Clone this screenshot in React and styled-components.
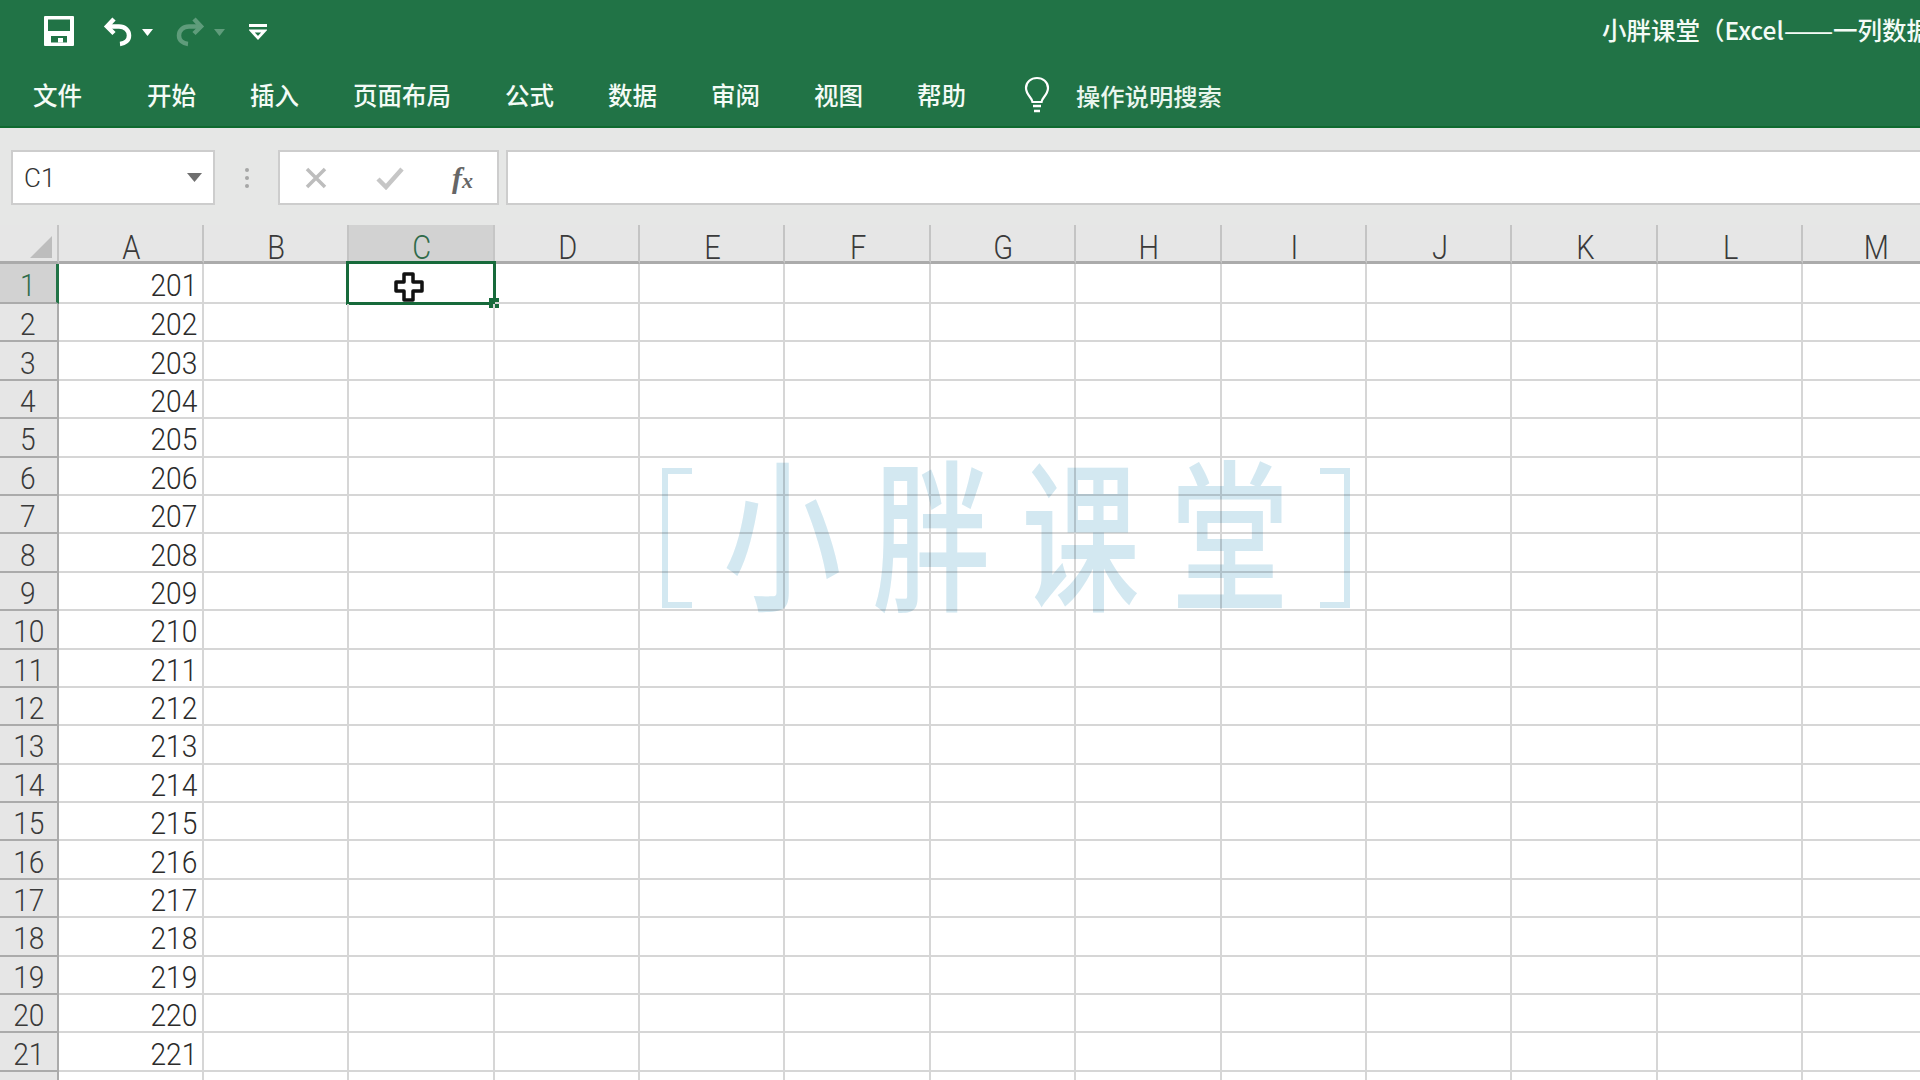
import React from "react";
import styled, { createGlobalStyle } from "styled-components";

const cjk = '"Noto Sans CJK SC", "Liberation Sans", sans-serif';
const sheetFont = 'Roboto, "Liberation Sans", sans-serif';
const ribbonGreen = "#217346";

const GlobalStyle = createGlobalStyle`
  html, body {
    margin: 0;
    padding: 0;
    background: #fff;
    overflow: hidden;
  }
`;

const Page = styled.div`
  position: relative;
  width: 1920px;
  height: 1080px;
  overflow: hidden;
  background: #fff;
  font-family: ${cjk};
`;

const Ribbon = styled.div`
  height: 128px;
  box-sizing: border-box;
  background: ${ribbonGreen};
  border-bottom: 2px solid #0f6a30;
  color: #fff;
`;

const TitleRow = styled.div`
  height: 64px;
  display: flex;
  align-items: center;
  padding-left: 44px;
`;

const QuickIcon = styled.svg`
  flex: none;
  display: block;
  margin-left: ${(p) => p.$left || 0}px;
  margin-top: ${(p) => p.$top || 0}px;
`;

const Title = styled.div`
  flex: none;
  margin-left: 1335px;
  margin-top: -6px;
  font-size: 24.5px;
  font-weight: 500;
  white-space: nowrap;
  color: #f4fbf6;
`;

const TitleDash = styled.span`
  display: inline-block;
  margin: 0 4px;
  transform: scaleX(1.2);
`;

const TabRow = styled.div`
  height: 62px;
  display: flex;
  align-items: center;
  padding-left: 33px;
`;

const Tab = styled.div`
  font-size: 24.5px;
  font-weight: 500;
  line-height: 34px;
  margin-right: ${(p) => p.$gap || 54}px;
  white-space: nowrap;
  color: #f4fbf6;
`;

const SearchHint = styled.div`
  display: flex;
  align-items: center;
  gap: 26px;
  font-size: 24.3px;
  font-weight: 500;
  margin-left: 12px;
  color: #eaf6ee;
`;

const FormulaBar = styled.div`
  height: 97px;
  box-sizing: border-box;
  background: #e6e7e6;
  padding: 22px 0 0 11px;
  display: flex;
  align-items: flex-start;
`;

const FieldBox = styled.div`
  flex: none;
  height: 55px;
  box-sizing: border-box;
  background: #fff;
  border: 2px solid #cdcdcd;
  display: flex;
  align-items: center;
`;

const NameBox = styled(FieldBox)`
  width: 204px;
  padding: 0 11px;
  justify-content: space-between;
  font-family: ${sheetFont};
  font-weight: 300;
  font-size: 26px;
  color: #333;
`;

const Dots = styled.div`
  flex: none;
  width: 63px;
  height: 55px;
  display: flex;
  flex-direction: column;
  align-items: center;
  justify-content: center;
  gap: 4px;

  span {
    width: 4px;
    height: 4px;
    background: #a6a6a6;
    border-radius: 50%;
  }
`;

const FxBox = styled(FieldBox)`
  width: 221px;
  justify-content: space-between;
  padding: 0 24px 0 24px;
`;

const FormulaInput = styled(FieldBox)`
  width: 1500px;
  margin-left: 7px;
`;

const FxLabel = styled.span`
  font-family: "Liberation Serif", serif;
  font-style: italic;
  font-weight: 700;
  font-size: 30px;
  line-height: 1;
  color: #666;

  small {
    font-size: 22px;
  }
`;

const Sheet = styled.div`
  display: grid;
  grid-template-columns: 58.5px repeat(13, 145.4px);
  grid-template-rows: 39px 40px repeat(21, 38.4px) 20px;
  width: 2000px;
`;

const Corner = styled.div`
  background: #e6e6e6;
  border-right: 2px solid #c4c4c4;
  border-bottom: 3px solid #ababab;
  box-sizing: border-box;
  position: relative;
`;

const CornerMark = styled.svg`
  position: absolute;
  right: 5px;
  bottom: 3px;
`;

const ColHead = styled.div`
  box-sizing: border-box;
  background: ${(p) => (p.$selected ? "#d2d2d2" : "#e6e6e6")};
  border-right: 2px solid ${(p) => (p.$selected ? "#c6c6c6" : "#c4c4c4")};
  border-bottom: 3px solid #ababab;
  display: flex;
  align-items: center;
  justify-content: center;
  color: ${(p) => (p.$selected ? "#2f6b4a" : "#3a3a3a")};
  font-family: ${sheetFont};
  font-weight: 300;
  font-size: 33px;
  line-height: 1;
  padding-top: 8px;
  padding-left: 2px;
`;

const RowHead = styled.div`
  box-sizing: border-box;
  background: ${(p) => (p.$selected ? "#d2d2d2" : "#e6e6e6")};
  border-right: ${(p) => (p.$selected ? "3px solid #217346" : "2px solid #ababab")};
  border-bottom: 2px solid #ababab;
  display: flex;
  align-items: center;
  justify-content: center;
  color: ${(p) => (p.$selected ? "#2f6b4a" : "#3a3a3a")};
  font-family: ${sheetFont};
  font-weight: 300;
  font-size: 32px;
  line-height: 1;
  padding-top: 4px;
`;

const Narrow = styled.span`
  display: inline-block;
  transform: scaleX(0.88);
  transform-origin: ${(p) => p.$origin || "center"};
`;

const Cell = styled.div`
  position: relative;
  box-sizing: border-box;
  border-right: 2px solid #d6d6d6;
  border-bottom: 2px solid #d6d6d6;
  display: flex;
  align-items: center;
  justify-content: flex-end;
  padding: 4px 5px 0 0;
  color: #2b2b2b;
  font-family: ${sheetFont};
  font-weight: 300;
  font-size: 32px;
  line-height: 1;
`;

const Selection = styled.div`
  position: absolute;
  left: -3px;
  top: -3px;
  right: -3px;
  bottom: -3px;
  border: 3px solid #176a3b;
  box-sizing: border-box;
`;

const FillHandle = styled.div`
  position: absolute;
  right: -6px;
  bottom: -6px;
  width: 10px;
  height: 10px;
  background: #176a3b;
`;

const CursorMark = styled.svg`
  position: absolute;
  left: 45px;
  top: 8px;
`;

const Watermark = styled.div`
  position: absolute;
  left: 662px;
  top: 463px;
  width: 688px;
  height: 150px;
  display: flex;
  align-items: center;
  justify-content: space-between;
  pointer-events: none;
  mix-blend-mode: multiply;
  color: #d3e8f1;
  font-family: ${cjk};
  font-size: 118px;
  font-weight: 500;
  line-height: 150px;
`;

const WaterGlyph = styled.span`
  display: block;
  transform: translateY(-10px) scaleY(1.38);
`;

const WaterBracket = styled.span`
  display: block;
  width: 30px;
  height: 140px;
  box-sizing: border-box;
  border: 6px solid #d3e8f1;
  border-${(p) => (p.$close ? "left" : "right")}: none;
`;

const columns = "ABCDEFGHIJKLM".split("");
const tabs = [
  ["文件", 65],
  ["开始"],
  ["插入"],
  ["页面布局"],
  ["公式"],
  ["数据"],
  ["审阅"],
  ["视图"],
  ["帮助", 46],
];

function SaveIcon() {
  return (
    <QuickIcon $top={-2} width="30" height="30" viewBox="0 0 30 30">
      <path d="M0 1a1 1 0 0 1 1-1h28a1 1 0 0 1 1 1v28a1 1 0 0 1-1 1H1a1 1 0 0 1-1-1z" fill="#fff" />
      <path d="M4 3.500h22V15H4z" fill={ribbonGreen} />
      <path d="M7 20h16v6.500H7z" fill={ribbonGreen} />
      <path d="M14 22h5v4.500h-5z" fill="#fff" />
    </QuickIcon>
  );
}

function UndoIcon({ dim, left }) {
  const color = dim ? "#5f9c7b" : "#fff";
  return (
    <QuickIcon
      $left={left}
      $top={-3}
      width="30"
      height="32"
      viewBox="0 0 30 32"
      fill="none"
      style={dim ? { transform: "scaleX(-1)" } : undefined}
    >
      <path d="M11 4 4 11.500l7 7" stroke={color} strokeWidth="4.500" />
      <path d="M5 11.500h11c6 0 10 4 10 9s-4 8-9 8.500" stroke={color} strokeWidth="4.500" />
    </QuickIcon>
  );
}

function Caret({ dim, left }) {
  return (
    <QuickIcon $left={left} $top={0} width="11" height="7" viewBox="0 0 11 7">
      <path d="M0 0h11L5.500 7z" fill={dim ? "#5f9c7b" : "#fff"} />
    </QuickIcon>
  );
}

function CustomizeIcon() {
  return (
    <QuickIcon $left={24} $top={1} width="18" height="17" viewBox="0 0 18 17" fill="none">
      <path d="M0 1.500h18" stroke="#fff" strokeWidth="3" />
      <path d="M2.500 7h13L9 14z" stroke="#fff" strokeWidth="2.800" />
    </QuickIcon>
  );
}

function BulbIcon() {
  return (
    <svg width="26" height="38" viewBox="0 0 26 38" fill="none">
      <path
        d="M8.500 26c0-4-6.500-7-6.500-14C2 6 7 2 13 2s11 4 11 10c0 7-6.500 10-6.500 14z"
        stroke="#fff"
        strokeWidth="2.200"
      />
      <path d="M9 30h8M10 35h6" stroke="#fff" strokeWidth="2.500" />
    </svg>
  );
}

export default function App() {
  const rows = [];
  for (let i = 1; i <= 22; i++) rows.push(i);

  return (
    <Page>
      <GlobalStyle />
      <Ribbon>
        <TitleRow>
          <SaveIcon />
          <UndoIcon left={29} />
          <Caret left={9} />
          <UndoIcon dim left={22} />
          <Caret dim left={9} />
          <CustomizeIcon />
          <Title>
            小胖课堂（Excel<TitleDash>——</TitleDash>一列数据
          </Title>
        </TitleRow>
        <TabRow>
          {tabs.map(([name, gap]) => (
            <Tab key={name} $gap={gap}>
              {name}
            </Tab>
          ))}
          <SearchHint>
            <BulbIcon />
            操作说明搜索
          </SearchHint>
        </TabRow>
      </Ribbon>

      <FormulaBar>
        <NameBox>
          C1
          <svg width="15" height="9" viewBox="0 0 15 9">
            <path d="M0 0h15L7.500 9z" fill="#6f6f6f" />
          </svg>
        </NameBox>
        <Dots>
          <span />
          <span />
          <span />
        </Dots>
        <FxBox>
          <svg width="24" height="24" viewBox="0 0 24 24" fill="none">
            <path d="M3 3l18 18M21 3 3 21" stroke="#bdbdbd" strokeWidth="3.500" />
          </svg>
          <svg width="28" height="24" viewBox="0 0 28 24" fill="none">
            <path d="M2 13l8 8L26 3" stroke="#c6c6c6" strokeWidth="4.500" />
          </svg>
          <FxLabel>
            f<small>x</small>
          </FxLabel>
        </FxBox>
        <FormulaInput />
      </FormulaBar>

      <Sheet>
        <Corner>
          <CornerMark width="22" height="22" viewBox="0 0 22 22">
            <path d="M22 0v22H0z" fill="#bdbdbd" />
          </CornerMark>
        </Corner>
        {columns.map((c) => (
          <ColHead key={c} $selected={c === "C"}>
            <Narrow>{c}</Narrow>
          </ColHead>
        ))}
        {rows.map((r) => (
          <React.Fragment key={r}>
            <RowHead $selected={r === 1}>{r < 22 && <Narrow>{r}</Narrow>}</RowHead>
            {columns.map((c) => (
              <Cell key={c}>
                {c === "A" && r < 22 && <Narrow $origin="right">{200 + r}</Narrow>}
                {c === "C" && r === 1 && (
                  <Selection>
                    <CursorMark width="30" height="30" viewBox="0 0 30 30">
                      <path
                        d="M10 2h9v8h9v9h-9v9h-9v-9H2v-9h8z"
                        fill="#fff"
                        stroke="#111"
                        strokeWidth="3.500"
                        strokeLinejoin="round"
                      />
                    </CursorMark>
                    <FillHandle />
                  </Selection>
                )}
              </Cell>
            ))}
          </React.Fragment>
        ))}
      </Sheet>

      <Watermark>
        <WaterBracket />
        <WaterGlyph>小</WaterGlyph>
        <WaterGlyph>胖</WaterGlyph>
        <WaterGlyph>课</WaterGlyph>
        <WaterGlyph>堂</WaterGlyph>
        <WaterBracket $close />
      </Watermark>
    </Page>
  );
}
